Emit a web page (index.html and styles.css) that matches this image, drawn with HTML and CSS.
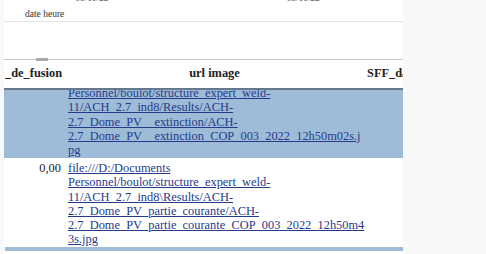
FILE: index.html
```html
<!DOCTYPE html>
<html lang="fr">
<head>
<meta charset="utf-8">
<title>Résultats</title>
<link rel="stylesheet" href="styles.css">
</head>
<body>
<div class="panel">
  <div class="top">
    <div class="clip-line">
      <span class="clip-a">01/11/22</span>
      <span class="clip-b">03/11/22</span>
    </div>
    <div class="date-label">date heure</div>
  </div>
  <div class="filter-row"><span class="grip"></span></div>
  <div class="grid head">
    <div class="cell c1">_de_fusion</div>
    <div class="cell c2 center">url image</div>
    <div class="cell c3">SFF_date</div>
  </div>
  <div class="body">
    <div class="rows">
      <div class="grid row blue">
        <div class="cell c1 num">0,00</div>
        <div class="cell c2"><a href="#">file:///D:/Documents Personnel/boulot/structure_expert_weld-11/ACH_2.7_ind8/Results/ACH-2.7_Dome_PV__extinction/ACH-2.7_Dome_PV__extinction_COP_003_2022_12h50m02s.jpg</a></div>
        <div class="cell c3"></div>
      </div>
      <div class="grid row">
        <div class="cell c1 num">0,00</div>
        <div class="cell c2"><a href="#">file:///D:/Documents Personnel/boulot/structure_expert_weld-11/ACH_2.7_ind8\Results/ACH-2.7_Dome_PV_partie_courante/ACH-2.7_Dome_PV_partie_courante_COP_003_2022_12h50m43s.jpg</a></div>
        <div class="cell c3"></div>
      </div>
      <div class="bar"></div>
    </div>
  </div>
</div>
</body>
</html>
```
FILE: styles.css
```css
html, body {
  margin: 0;
  padding: 0;
  background: #f8f8f8;
}
body {
  font-family: "Liberation Serif", Tinos, "Noto Serif", "DejaVu Serif", serif;
  color: #222;
}
.panel {
  margin-left: 4px;
  width: 399px;
  height: 254px;
  background: #fff;
  overflow: hidden;
}
.top {
  display: flow-root;
  height: 22px;
  box-sizing: border-box;
  border-bottom: 1px solid #e3e3e3;
}
.clip-line {
  display: flex;
  margin-top: -8.5px;
  height: 12px;
  font-size: 9.5px;
  line-height: 12px;
  color: #666;
}
.clip-a { margin-left: 71px; }
.clip-b { margin-left: 178px; }
.date-label {
  margin-top: 4.5px;
  margin-left: 21px;
  font-size: 9.5px;
  line-height: 12px;
  color: #333;
}
.filter-row {
  position: relative;
  height: 38px;
  box-sizing: border-box;
  border-bottom: 1px solid #c6c6c6;
}
.grip {
  position: absolute;
  left: 32px;
  bottom: -2px;
  width: 12px;
  height: 3px;
  background: #a9a9a9;
}
.grid {
  display: grid;
  grid-template-columns: 60px 301px 80px;
}
.head {
  height: 30px;
  box-sizing: border-box;
  border-bottom: 2px solid #66798c;
  font-weight: bold;
  font-size: 12.4px;
  line-height: 15px;
  color: #222;
}
.head .cell {
  display: flex;
  align-items: center;
  padding-bottom: 2px;
  white-space: nowrap;
}
.head .c1 { padding-left: 1px; }
.head .c2 { justify-content: center; }
.head .c3 { padding-left: 2px; }
.body {
  height: 164px;
  overflow: hidden;
}
.rows {
  margin-top: -21px;
}
.row {
  font-size: 12.4px;
  line-height: 14.2px;
}
.row .cell {
  padding: 3px 0 1px;
}
.row .c2 {
  padding-left: 4px;
  padding-right: 0;
  overflow-wrap: anywhere;
}
.row .num {
  text-align: right;
  padding-right: 3px;
}
.blue { background: #9ebcd8; }
a {
  color: #263a8a;
  text-decoration: underline;
}
.bar {
  height: 4px;
  margin-left: 1px;
  background: #9ebcd8;
}
```
